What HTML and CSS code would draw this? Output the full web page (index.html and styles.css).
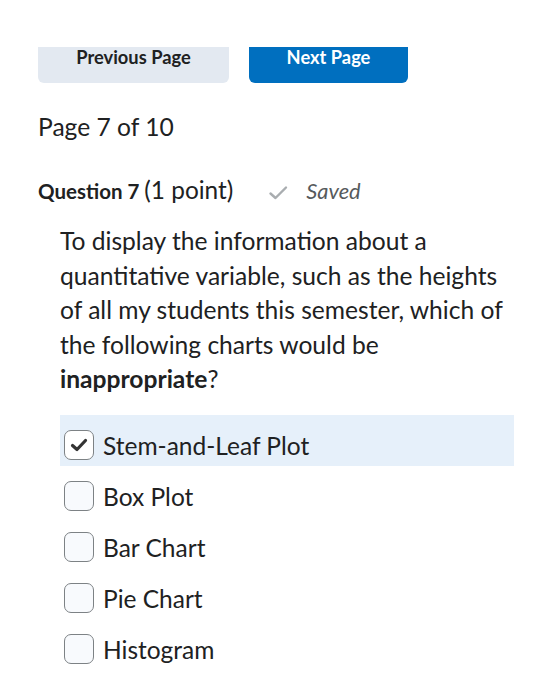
FILE: index.html
```html
<!DOCTYPE html>
<html>
<head>
<meta charset="utf-8">
<link rel="stylesheet" href="styles.css">
</head>
<body>
<div class="page">
  <div class="nav">
    <button class="btn btn-prev">Previous Page</button>
    <button class="btn btn-next">Next Page</button>
  </div>
  <div class="pageno">Page 7 of 10</div>
  <div class="qhead">
    <span class="qtitle">Question 7</span>
    <span class="qpts">(1 point)</span>
    <span class="saved">
      <svg class="savedcheck" width="21" height="16" viewBox="0 0 21 16"><path d="M2.5 8.5 L7.5 13 L18 2.5" fill="none" stroke="#a9adb0" stroke-width="2.4" stroke-linecap="round" stroke-linejoin="round"/></svg>
      <span class="savedtext">Saved</span>
    </span>
  </div>
  <div class="qbody">
    <p class="qtext">To display the information about a quantitative variable, such as the heights of all my students this semester, which of the following charts would be <b>inappropriate</b>?</p>
    <div class="options">
      <label class="opt opt-sel">
        <span class="box"><svg width="20" height="16" viewBox="0 0 20 16"><path d="M3.5 8.5 L8 12.5 L16.5 3.5" fill="none" stroke="#333" stroke-width="3.2" stroke-linecap="round" stroke-linejoin="round"/></svg></span>
        <span class="otext">Stem-and-Leaf Plot</span>
      </label>
      <label class="opt"><span class="box"></span><span class="otext">Box Plot</span></label>
      <label class="opt"><span class="box"></span><span class="otext">Bar Chart</span></label>
      <label class="opt"><span class="box"></span><span class="otext">Pie Chart</span></label>
      <label class="opt"><span class="box"></span><span class="otext">Histogram</span></label>
    </div>
  </div>
</div>
</body>
</html>
```
FILE: styles.css
```css
html, body {
  margin: 0;
  padding: 0;
  background: #ffffff;
}
body {
  font-family: Lato, "Open Sans", sans-serif;
  color: #202122;
}
.page {
  padding: 47px 0 0 38px;
}
.nav {
  display: flex;
  gap: 20px;
}
.btn {
  font-family: Lato, sans-serif;
  font-weight: 700;
  font-size: 18.3px;
  border: none;
  border-radius: 0 0 6px 6px;
  height: 36px;
  padding: 0 0 16px 0;
  display: flex;
  align-items: center;
  justify-content: center;
}
.btn-prev {
  width: 191px;
  background: #e3e9f1;
  color: #202122;
}
.btn-next {
  width: 159px;
  background: #006fbf;
  color: #ffffff;
}
.pageno {
  margin-top: 29px;
  font-size: 24.6px;
  line-height: 30px;
}
.qhead {
  margin-top: 33px;
  display: flex;
  align-items: baseline;
  height: 30px;
}
.qtitle {
  font-weight: 700;
  font-size: 20.5px;
}
.qpts {
  font-size: 24.4px;
  margin-left: 5px;
}
.saved {
  margin-left: 35px;
  display: inline-flex;
  align-items: baseline;
}
.savedcheck {
  position: relative;
  top: 2px;
}
.savedtext {
  font-style: italic;
  font-size: 21.8px;
  color: #565a5c;
  margin-left: 17px;
}
.qbody {
  padding-left: 22px;
  width: 454px;
}
.qtext {
  margin: 19px 0 0 0;
  font-size: 24.6px;
  line-height: 34.5px;
}
.qtext b {
  font-weight: 700;
}
.options {
  margin-top: 18px;
  display: flex;
  flex-direction: column;
}
.opt {
  box-sizing: border-box;
  display: flex;
  align-items: center;
  height: 51px;
  padding: 10px 0 0 4px;
}
.opt-sel {
  background: #e6f0fa;
}
.box {
  width: 28px;
  height: 28px;
  border: 1.5px solid #7d8285;
  border-radius: 7px;
  background: #f8fafd;
  display: flex;
  align-items: center;
  justify-content: center;
}
.opt-sel .box {
  background: #ffffff;
}
.otext {
  margin-left: 9px;
  font-size: 24.5px;
}
```
